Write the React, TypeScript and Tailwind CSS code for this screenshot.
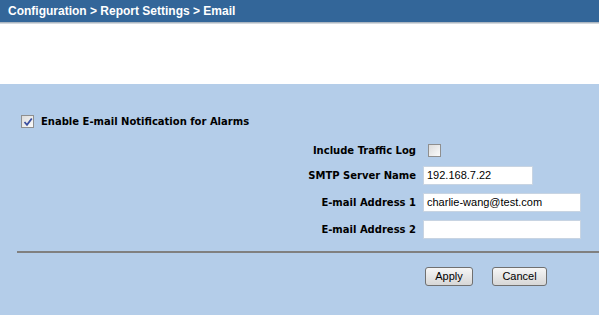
import React from "react";

const labelFont = { fontFamily: '"DejaVu Sans", Verdana, sans-serif' };

function Checkbox({ checked }: { checked?: boolean }) {
  return (
    <span className="flex h-[13px] w-[13px] items-center justify-center border border-[#8f8f8f] bg-gradient-to-br from-[#dcdcdc] to-[#fbfbfb]">
      {checked && (
        <svg width="10" height="10" viewBox="0 0 10 10">
          <path d="M1.5 5 L4 7.8 L8.8 1.5" fill="none" stroke="#3b4fa0" strokeWidth="1.8" />
        </svg>
      )}
    </span>
  );
}

function Field({ value, width }: { value: string; width: string }) {
  return (
    <div
      className={`flex h-[19px] items-center border border-[#c8d4e2] bg-white px-[3px] text-[11px] font-normal text-black font-['Liberation_Sans',Arial,sans-serif] ${width}`}
    >
      {value}
    </div>
  );
}

function Button({ label, width }: { label: string; width: string }) {
  return (
    <button
      className={`h-[19px] rounded-[3px] border border-[#707070] bg-gradient-to-b from-[#f6f6f6] to-[#d7d7d7] text-[11px] leading-none text-black font-['Liberation_Sans',Arial,sans-serif] ${width}`}
    >
      {label}
    </button>
  );
}

export default function App() {
  return (
    <div className="flex h-[315px] w-[599px] flex-col overflow-hidden bg-white">
      <div className="flex h-[22px] items-center bg-[#336699] pl-2 text-[12px] font-bold text-white font-['Liberation_Sans',Arial,sans-serif]">
        Configuration &gt; Report Settings &gt; Email
      </div>
      <div className="h-[2px] bg-gradient-to-b from-[#9aa6b2] to-[#e6e9ec]" />
      <div className="h-[60px]" />
      <div className="flex flex-1 flex-col bg-[#b4cde9]" style={labelFont}>
        <div className="flex items-center gap-[7px] pl-[21px] pt-[30px]">
          <Checkbox checked />
          <span className="text-[10px] font-bold text-black">Enable E-mail Notification for Alarms</span>
        </div>
        <div className="mt-[14px] grid grid-cols-[416px_auto] items-center gap-x-[7px] gap-y-[8px] text-[10px] font-bold text-black">
          <span className="text-right">Include Traffic Log</span>
          <div className="pl-[5px]">
            <Checkbox />
          </div>
          <span className="text-right">SMTP Server Name</span>
          <Field value="192.168.7.22" width="w-[110px]" />
          <span className="text-right">E-mail Address 1</span>
          <Field value="charlie-wang@test.com" width="w-[158px]" />
          <span className="text-right">E-mail Address 2</span>
          <Field value="" width="w-[158px]" />
        </div>
        <div className="ml-[17px] mt-[12px] h-[2px] bg-[#808080]" />
        <div className="mt-[14px] flex gap-[19px] pl-[425px]">
          <Button label="Apply" width="w-[48px]" />
          <Button label="Cancel" width="w-[55px]" />
        </div>
      </div>
    </div>
  );
}
